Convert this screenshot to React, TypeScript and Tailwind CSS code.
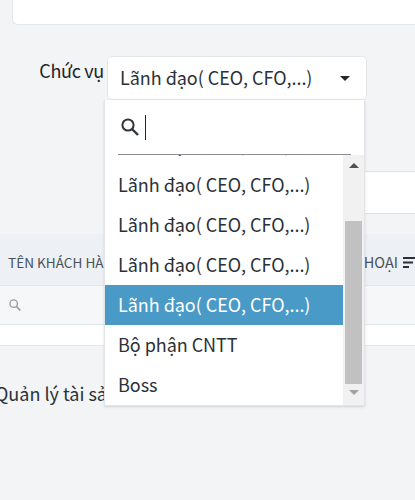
const FONT = "font-['Noto_Sans_CJK_SC','Noto_Sans',sans-serif]";

const OPTIONS = [
  "Lãnh đạo( CEO, CFO,...)",
  "Lãnh đạo( CEO, CFO,...)",
  "Lãnh đạo( CEO, CFO,...)",
  "Lãnh đạo( CEO, CFO,...)",
  "Lãnh đạo( CEO, CFO,...)",
  "Bộ phận CNTT",
  "Boss",
];

function SearchIcon({ className }: { className: string }) {
  return (
    <svg viewBox="0 0 18 18" fill="none" stroke="currentColor" className={className}>
      <circle cx="7" cy="7" r="5.6" strokeWidth="2" />
      <path d="M11 11l6 6" strokeWidth="2.4" />
    </svg>
  );
}

function SortIcon() {
  return (
    <svg viewBox="0 0 13 11" fill="currentColor" className="h-[11px] w-[13px] shrink-0 text-[#2b3138]">
      <rect x="0" y="0" width="13" height="2" />
      <rect x="0" y="4.5" width="10" height="2" />
      <rect x="0" y="9" width="6" height="2" />
    </svg>
  );
}

function Dropdown() {
  return (
    <div className="absolute left-[-3px] top-[44px] z-10 w-[261px] border border-t-0 border-[#e2e4e7] bg-white shadow-sm">
      <div className="h-[55px] px-[13px] pt-[1px]">
        <div className="flex h-[54px] items-center border-b border-[#8a8d91] pl-[3px] pb-[1px]">
          <SearchIcon className="h-[18px] w-[18px] text-[#2f343a]" />
          <span className="ml-[6px] h-[25px] w-px bg-[#22262a]" />
        </div>
      </div>
      <div className="flex h-[250px]">
        <ul className="h-full w-[238px] overflow-hidden whitespace-nowrap text-[18px] tracking-[-0.04px]">
          {OPTIONS.map((name, i) => (
            <li
              key={i}
              className={`flex h-[40px] items-center px-[13px] pb-[2px] ${i === 0 ? "-mt-[30px]" : ""} ${
                i === 4 ? "bg-[#4a9ac7] text-white" : "text-[#2b3138]"
              }`}
            >
              {name}
            </li>
          ))}
        </ul>
        <div className="flex h-full w-[21px] flex-col items-center bg-[#f1f1f1]">
          <div className="flex h-[66px] w-full justify-center pt-[8px]">
            <span className="h-0 w-0 border-x-[5px] border-b-[5px] border-x-transparent border-b-[#505050]" />
          </div>
          <div className="h-[163px] w-[17px] bg-[#c1c1c1]" />
          <div className="flex flex-1 justify-center pt-[6px]">
            <span className="h-0 w-0 border-x-[5px] border-t-[5px] border-x-transparent border-t-[#a3a3a3]" />
          </div>
        </div>
      </div>
    </div>
  );
}

function RoleSelect() {
  return (
    <div className="relative ml-[107px] h-[44px] w-[260px]">
      <div className="flex h-full items-center justify-between rounded-[5px] border border-[#e4e6e9] bg-white pl-[12px] pr-[16px] text-[18px] tracking-[-0.04px] text-[#2b3138]">
        <span className="pb-[2px]">Lãnh đạo( CEO, CFO,...)</span>
        <span className="h-0 w-0 border-x-[5px] border-t-[5px] border-x-transparent border-t-[#23272b]" />
      </div>
      <Dropdown />
      <span className="absolute right-[263px] top-[1px] whitespace-nowrap text-[18px] tracking-[-0.3px] text-[#1f2429]">
        Chức vụ
      </span>
    </div>
  );
}

function CustomerTable() {
  return (
    <div className="mt-[20px] overflow-hidden text-[#4a5259]">
      <div className="flex h-[51px] items-center justify-between whitespace-nowrap bg-[#edf1f5] pl-[8px] pt-[5px]">
        <span className="text-[13.6px]">TÊN KHÁCH HÀNG</span>
        <span className="-mr-[1px] flex items-center gap-[5px] text-[14.5px]">
          THOẠI
          <SortIcon />
        </span>
      </div>
      <div className="flex h-[40px] items-center border-y border-[#e2e5e9] bg-[#f6f7f9] pl-[9px]">
        <SearchIcon className="h-[12px] w-[12px] text-[#9a9da1]" />
      </div>
      <div className="h-[21px] border-b border-[#e2e5e9] bg-white" />
    </div>
  );
}

export default function App() {
  return (
    <div className={`h-[500px] w-[415px] overflow-hidden bg-[#f3f4f6] ${FONT}`}>
      <div className="ml-[12px] h-[25px] rounded-bl-[6px] border-b border-l border-[#e5e7eb] bg-white" />
      <div className="pt-[31px]">
        <RoleSelect />
      </div>
      <div className="mt-[71px] ml-[365px] h-[43px] border-y border-[#dfe2e6] bg-white" />
      <CustomerTable />
      <p className="mt-[34px] -ml-[5px] whitespace-nowrap text-[18px] leading-[26px] text-[#2b3138]">
        Quản lý tài sản
      </p>
    </div>
  );
}
